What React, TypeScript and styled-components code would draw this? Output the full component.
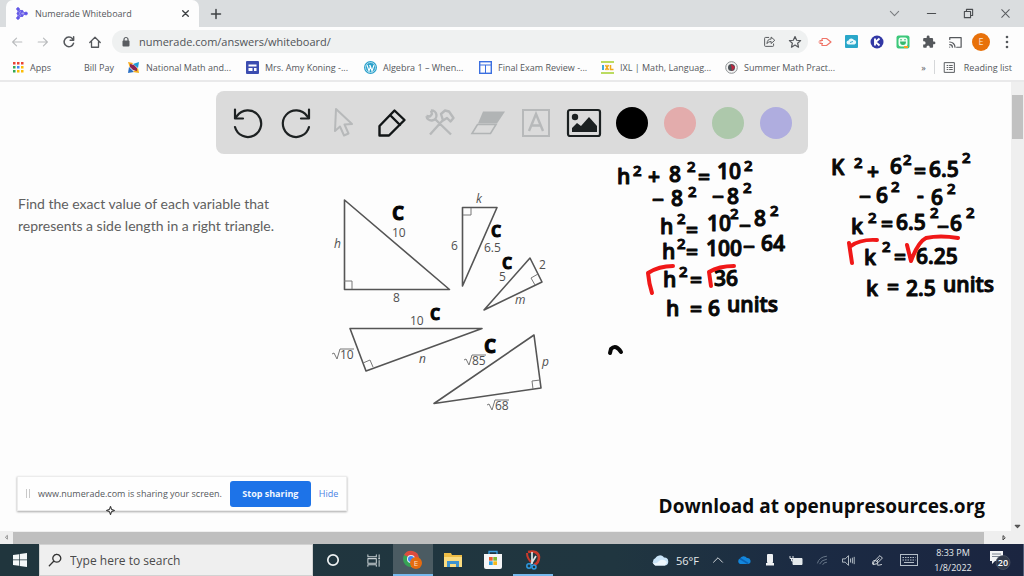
import React from "react";
import styled, { createGlobalStyle } from "styled-components";

const ui = `"Open Sans", "Noto Sans", sans-serif`;

const Global = createGlobalStyle`
  * { box-sizing: border-box; }
  html, body { margin: 0; background: #fdfdfd; }
  body { font-family: ${ui}; color: #55585c; }
  button, input { font: inherit; color: inherit; border: 0; background: none; padding: 0; margin: 0; outline: 0; }
  a { color: inherit; text-decoration: none; }
  svg { display: block; flex: none; }
`;

const Screen = styled.div`
  min-height: 100vh;
  display: flex;
  flex-direction: column;
  overflow: hidden;
`;

const TabStrip = styled.header`
  height: 27px;
  background: #dadddf;
  display: flex;
  align-items: center;
  padding-left: 6px;
`;
const Tab = styled.div`
  align-self: stretch;
  width: 193px;
  padding: 0 9px 0 10px;
  background: #fdfdfd;
  border-radius: 7px 7px 0 0;
  display: flex;
  align-items: center;
  gap: 7px;
`;
const TabTitle = styled.span`
  flex: 1;
  font-size: 9px;
  white-space: nowrap;
`;
const WindowControls = styled.div`
  margin-left: auto;
  display: flex;
`;
const IconButton = styled.button<{ $w?: number; $h?: number }>`
  width: ${(p) => p.$w ?? 26}px;
  height: ${(p) => p.$h ?? 26}px;
  flex: none;
  display: flex;
  align-items: center;
  justify-content: center;
`;

const Toolbar = styled.div`
  height: 29px;
  background: #fdfdfd;
  display: flex;
  align-items: center;
  padding: 0 4px;
`;
const Omnibox = styled.div`
  flex: 1;
  min-width: 0;
  height: 23px;
  margin: 0 4px;
  padding-left: 9px;
  background: #eff1f1;
  border-radius: 12px;
  display: flex;
  align-items: center;
  gap: 8px;
`;
const OmniboxActions = styled.div`
  display: flex;
`;
const Address = styled.input`
  flex: 1;
  min-width: 0;
  font-size: 11px;
  color: #505357;
`;
const Avatar = styled.span`
  width: 18px;
  height: 18px;
  border-radius: 50%;
  background: #e8710a;
  color: #fbe3cf;
  font-size: 9px;
  line-height: 18px;
  text-align: center;
`;

const Bookmarks = styled.nav`
  height: 26px;
  padding: 0 12px 2px;
  background: #fdfdfd;
  border-bottom: 2px solid #e9e9ea;
  display: flex;
  align-items: center;
  font-size: 9px;
  white-space: nowrap;
`;
const Bookmark = styled.a<{ $w: number }>`
  width: ${(p) => p.$w}px;
  display: flex;
  align-items: center;
  gap: 6px;
`;
const ReadingList = styled.div`
  margin-left: auto;
  display: flex;
  align-items: center;
  gap: 8px;
`;
const Divider = styled.span`
  width: 1px;
  height: 14px;
  background: #d5d7d9;
`;

const Viewport = styled.div`
  flex: 1;
  display: flex;
`;
const Page = styled.main`
  flex: 1;
  min-width: 0;
  display: flex;
  flex-direction: column;
  background: #fdfdfd;
`;
const Palette = styled.div`
  align-self: center;
  width: 592px;
  height: 63px;
  margin: 9px 0 0 12px;
  padding: 0 8px;
  background: #dbdbdb;
  border-radius: 8px;
  display: flex;
  align-items: center;
`;
const Swatch = styled.span<{ $c: string }>`
  width: 32px;
  height: 32px;
  border-radius: 50%;
  background: ${(p) => p.$c};
`;
const Board = styled.section`
  flex: 1;
  display: flex;
  align-items: flex-start;
`;
const Question = styled.p`
  flex: none;
  width: 320px;
  margin: 0;
  padding: 39px 40px 0 18px;
  font-family: Lato, sans-serif;
  font-size: 14px;
  line-height: 22px;
  color: #606060;
`;
const Figures = styled.svg`
  margin-top: 31px;
  font-family: "Open Sans", sans-serif;
  font-size: 12px;
  fill: #505050;
`;
const Ink = styled.svg`
  margin-left: 40px;
  overflow: visible;
`;
const Footer = styled.footer`
  padding: 0 26px 12px 17px;
  display: flex;
  align-items: flex-end;
  justify-content: space-between;
`;
const ShareBar = styled.div`
  height: 35px;
  margin-bottom: 8px;
  padding: 0 8px;
  background: #fefefe;
  border: 1px solid #ececec;
  box-shadow: 0 1px 2px #a9a9a9;
  display: flex;
  align-items: center;
  font-size: 9px;
  white-space: nowrap;
`;
const Grip = styled.span`
  width: 4px;
  height: 9px;
  margin-right: 8px;
  border: solid #c9c9c9;
  border-width: 0 1px;
`;
const StopButton = styled.button`
  width: 81px;
  height: 26px;
  margin: 0 8px;
  border-radius: 3px;
  background: #1d73e8;
  color: #f2f7ff;
  font-weight: 700;
`;
const HideButton = styled.button`
  color: #4a82e4;
`;
const Credit = styled.p`
  margin: 0;
  line-height: 26px;
  font-weight: 700;
  font-size: 19px;
  color: #0c0c0c;
`;
const Cursor = styled.span`
  position: absolute;
  left: 106px;
  top: 506px;
`;

const VScroll = styled.div`
  width: 13px;
  background: #efefef;
  display: flex;
  flex-direction: column;
  align-items: center;
  justify-content: space-between;
`;
const VThumb = styled.div`
  width: 11px;
  height: 44px;
  margin: 13px 0 auto;
  background: #c1c1c1;
`;
const HScroll = styled.div`
  height: 13px;
  background: #efefef;
  display: flex;
  align-items: center;
`;
const HThumb = styled.div`
  flex: 1;
  height: 12px;
  background: #bfbfbf;
`;

const Taskbar = styled.footer`
  height: 32px;
  background: linear-gradient(90deg, #20353d, #203640 60%, #1b2a43 80%, #1b2540);
  color: #e6eaec;
  display: flex;
  align-items: center;
`;
const Search = styled.label`
  width: 274px;
  height: 32px;
  padding-left: 8px;
  background: #efefef;
  border: 1px solid #d2d2d2;
  display: flex;
  align-items: center;
  gap: 8px;
  color: #3e3e3e;
`;
const SearchInput = styled.input`
  flex: 1;
  min-width: 0;
  font-size: 12px;
  &::placeholder { color: #4a4a4a; opacity: 1; }
`;
const TaskButton = styled(IconButton)<{ $active?: boolean; $open?: boolean }>`
  width: 40px;
  height: 32px;
  background: ${(p) => (p.$active ? "#4b5b62" : "transparent")};
  box-shadow: ${(p) => (p.$open ? "inset 0 -2px #76b9ed" : "none")};
`;
const Weather = styled.button`
  margin-left: auto;
  margin-right: 6px;
  display: flex;
  align-items: center;
  gap: 7px;
  font-size: 11px;
`;
const Clock = styled.time`
  width: 56px;
  font-size: 9px;
  line-height: 15px;
  text-align: center;
`;
const Notifications = styled.button`
  width: 38px;
  margin-right: 4px;
  height: 32px;
  display: flex;
  align-items: center;
  justify-content: center;
`;
const DesktopEdge = styled.span`
  width: 1px;
  height: 32px;
  background: #53607a;
`;

type Mark = [number, number, string];

/* One array per written line; "²" marks are drawn as a small raised 2. */
const work: Mark[][] = [
  [[617, 184, "h"], [633, 176, "²"], [648, 184, "+"], [669, 182, "8"], [687, 172, "²"], [698, 185, "="], [717, 179, "10"], [744, 171, "²"]],
  [[652, 207, "−"], [671, 206, "8"], [688, 197, "²"], [712, 204, "−"], [727, 204, "8"], [743, 193, "²"]],
  [[660, 234, "h"], [677, 224, "²"], [686, 238, "="], [707, 231, "10"], [730, 219, "²"], [739, 233, "−"], [754, 226, "8"], [770, 216, "²"]],
  [[662, 259, "h"], [677, 249, "²"], [686, 260, "="], [706, 256, "100"], [743, 254, "−"], [761, 251, "64"]],
  [[663, 287, "h"], [679, 277, "²"], [690, 288, "="], [714, 286, "36"]],
  [[666, 316, "h"], [690, 317, "="], [708, 316, "6"], [727, 312, "units"]],
  [[831, 175, "K"], [854, 168, "²"], [867, 179, "+"], [890, 174, "6"], [903, 165, "²"], [914, 179, "="], [929, 177, "6.5"], [962, 163, "²"]],
  [[859, 204, "−"], [876, 203, "6"], [891, 192, "²"], [917, 203, "-"], [931, 205, "6"], [947, 194, "²"]],
  [[851, 234, "k"], [868, 223, "²"], [881, 232, "="], [896, 230, "6.5"], [930, 218, "²"], [937, 234, "−"], [950, 231, "6"], [966, 218, "²"]],
  [[864, 265, "k"], [882, 252, "²"], [894, 265, "="], [916, 264, "6.25"]],
  [[866, 296, "k"], [887, 295, "="], [906, 296, "2.5"], [943, 292, "units"]],
];

const Handwriting = () => (
  <Ink width="404" height="210" viewBox="600 154 404 210" fontFamily="'Open Sans', sans-serif" fill="#080808">
    <g fontSize="21" fontWeight="600" stroke="#080808" strokeWidth="1" strokeLinejoin="round">
      {work.map((line, i) => (
        <text key={i}>
          {line.map(([x, y, t], j) =>
            t === "²" ? <tspan key={j} x={x} y={y} fontSize="15">2</tspan> : <tspan key={j} x={x} y={y}>{t}</tspan>
          )}
        </text>
      ))}
    </g>
    <g fill="none" strokeLinecap="round" strokeLinejoin="round" strokeWidth="4">
      <path stroke="#f01818" d="M652 293Q649 284 648 273Q659 266 673 266M711 286L709 272Q719 266 734 266" />
      <path stroke="#f01818" d="M852 263L849 243M851 246Q860 239 877 240M907 245L911 261Q918 242 926 238Q940 235 958 238" />
      <path stroke="#080808" d="M610 353L611 349Q616 344 621 352" />
    </g>
  </Ink>
);

const Root = ({ x, y, n }: { x: number; y: number; n: string }) => (
  <g>
    <path d={`M${x} ${y - 5}l2 -1l3 6l3 -10h14`} fill="none" stroke="#777" />
    <text x={x + 8} y={y}>{n}</text>
  </g>
);

const Triangles = () => (
  <Figures width="240" height="235" viewBox="320 185 240 235">
    <g fill="none" stroke="#555" strokeWidth="1.6" strokeLinejoin="round">
      <path d="M344.500 200V289.500H449.500Z" />
      <path d="M462.500 207.500H497L462.500 286Z" />
      <path d="M530 258L542 282L484 310Z" />
      <path d="M350 328.500H482L366 371Z" />
      <path d="M534 335L541 388L434 403.500Z" />
      <path strokeWidth="1" stroke="#777" d="M344 281h8v8M463 215h8v-7M538 274l-7 4l4 7M363 363l7-3l3 7M540 380l-8 1l1 8" />
    </g>
    <text x="392" y="237">10</text>
    <text x="393" y="302">8</text>
    <text x="451" y="250">6</text>
    <text x="484" y="252">6.5</text>
    <text x="499" y="281">5</text>
    <text x="539" y="269">2</text>
    <text x="410" y="325">10</text>
    <g fontStyle="italic">
      <text x="334" y="248">h</text>
      <text x="476" y="203">k</text>
      <text x="515" y="304">m</text>
      <text x="419" y="363">n</text>
      <text x="542" y="366">p</text>
    </g>
    <Root x={332} y={359} n="10" />
    <Root x={464} y={365} n="85" />
    <Root x={487} y={410} n="68" />
    <g fontSize="19" fontWeight="700" fill="#050505" stroke="#050505" strokeWidth="1" strokeLinejoin="round">
      <text x="392" y="220">C</text>
      <text x="484" y="353">C</text>
      <text x="491" y="237" fontSize="16">C</text>
      <text x="502" y="269" fontSize="16">C</text>
      <text x="430" y="320" fontSize="16">C</text>
    </g>
  </Figures>
);

const Line = ({ d, s = 14, c = "#55585c", w = 1.3, box = 16, fill = "none" }: { d: string; s?: number; c?: string; w?: number; box?: number; fill?: string }) => (
  <svg width={s} height={s} viewBox={`0 0 ${box} ${box}`} fill={fill} stroke={c} strokeWidth={w} strokeLinecap="round" strokeLinejoin="round">
    <path d={d} />
  </svg>
);

const NumeradeLogo = () => (
  <svg width="12" height="13" viewBox="0 0 12 13" stroke="#6a5fe8" fill="#5b50e6">
    <path d="M2 2L10 6.500L2 11ZM2 2L6 8.700M2 11L6 4.300" fill="#a9a4f2" strokeWidth="1" />
    <circle cx="2" cy="2" r="1.300" /><circle cx="2" cy="6.500" r="1" /><circle cx="2" cy="11" r="1.300" />
    <circle cx="6" cy="4.300" r="1" /><circle cx="6" cy="8.700" r="1" /><circle cx="10" cy="6.500" r="1.400" />
  </svg>
);
const AppsIcon = () => (
  <svg width="12" height="12" viewBox="0 0 12 12">
    {["#ea4335", "#ea4335", "#ea4335", "#34a853", "#4285f4", "#fbbc05", "#34a853", "#fbbc05", "#fbbc05"].map((c, i) => (
      <rect key={i} x={(i % 3) * 4 + 1} y={Math.floor(i / 3) * 4 + 1} width="2.500" height="2.500" fill={c} />
    ))}
  </svg>
);
const MathIcon = () => (
  <svg width="13" height="13" viewBox="0 0 13 13">
    <path d="M1 1l5 1l-3 5z" fill="#f7a81b" /><path d="M12 1l-1 6l-5-4z" fill="#1f9ad6" />
    <path d="M1 12l1-6l5 5z" fill="#2a6fc4" /><path d="M12 12l-6-1l5-4z" fill="#f2b01e" />
    <path d="M3 3l4 1l3 3v3l-4-1l-3-3z" fill="#8c2450" />
  </svg>
);
const SiteIcon = () => (
  <svg width="13" height="13" viewBox="0 0 13 13"><rect width="13" height="13" rx="1" fill="#3c4db0" /><path d="M2.500 3.500h8v2h-8zM2.500 7h4v3h-4zM8 7h2.500v3H8z" fill="#fff" /></svg>
);
const WordpressIcon = () => (
  <svg width="13" height="13" viewBox="0 0 13 13"><circle cx="6.500" cy="6.500" r="6.500" fill="#2aa0cb" /><circle cx="6.500" cy="6.500" r="5" fill="none" stroke="#d8f0f8" strokeWidth=".7" /><path d="M3 4l2 6l1.500-4.500L8 10l2-6M5.500 4l1 2" fill="none" stroke="#fff" strokeWidth="1.100" /></svg>
);
const TableIcon = () => (
  <svg width="13" height="13" viewBox="0 0 13 13" fill="none" stroke="#3b6fe0"><rect x=".7" y=".7" width="11.600" height="11.600" strokeWidth="1.400" /><path d="M1 4h11M6.500 4v8" /></svg>
);
const IxlIcon = () => (
  <svg width="13" height="13" viewBox="0 0 13 13"><path d="M0 1h13M0 12h13" stroke="#a5cf2c" strokeWidth="1.600" /><path d="M2 4v5" stroke="#2b9fd8" strokeWidth="1.800" /><path d="M4.500 4l3 5M7.500 4l-3 5M9.500 4v4.500h3" stroke="#f0a91c" strokeWidth="1.500" fill="none" /></svg>
);
const TargetIcon = () => (
  <svg width="13" height="13" viewBox="0 0 13 13"><circle cx="6.500" cy="6.500" r="5.800" fill="#f4f4f4" stroke="#8e9294" /><circle cx="6.500" cy="6.500" r="3.500" fill="#4b5156" /><path d="M6 3l4 3l-3 4z" fill="#c1243f" /></svg>
);

const bookmarks: { label: string; w: number; icon?: React.ReactNode }[] = [
  { label: "Apps", w: 72, icon: <AppsIcon /> },
  { label: "Bill Pay", w: 43 },
  { label: "National Math and...", w: 119, icon: <MathIcon /> },
  { label: "Mrs. Amy Koning -...", w: 118, icon: <SiteIcon /> },
  { label: "Algebra 1 – When...", w: 115, icon: <WordpressIcon /> },
  { label: "Final Exam Review -...", w: 122, icon: <TableIcon /> },
  { label: "IXL | Math, Languag...", w: 124, icon: <IxlIcon /> },
  { label: "Summer Math Pract...", w: 124, icon: <TargetIcon /> },
];

const BrowserTools = () => (
  <Toolbar>
    <IconButton aria-label="Back"><Line c="#b9bbbd" d="M13.500 8H3M7.500 3.500L3 8l4.500 4.500" /></IconButton>
    <IconButton aria-label="Forward"><Line c="#b9bbbd" d="M2.500 8H13M8.500 3.500L13 8l-4.500 4.500" /></IconButton>
    <IconButton aria-label="Reload"><Line w={1.7} d="M13.200 9.500A5.500 5.500 0 1 1 12 4.200M13.300 2v4h-4" /></IconButton>
    <IconButton aria-label="Home"><Line w={1.5} d="M2 8.500L8 2.500l6 6M4 7.500V14h8V7.500" /></IconButton>
    <Omnibox>
      <svg width="10" height="12" viewBox="0 0 10 12" fill="#5a5d61"><rect x="1.500" y="4.500" width="7" height="6" rx="1" /><path d="M3 5V3.500a2 2 0 0 1 4 0V5" fill="none" stroke="#5a5d61" strokeWidth="1.200" /></svg>
      <Address aria-label="Address" defaultValue="numerade.com/answers/whiteboard/" />
      <OmniboxActions>
        <IconButton aria-label="Share"><Line s={13} w={1.2} d="M7 3H3Q2 3 2 4v9q0 1 1 1h9q1 0 1-1v-2M5 10q0-5 5-5V2.500l4.500 4L10 10.500V8q-3 0-5 2z" /></IconButton>
        <IconButton aria-label="Bookmark"><Line s={14} w={1.4} d="M8 1.800l1.900 4.200l4.500.4l-3.400 3l1 4.500L8 11.500l-4 2.400l1-4.500l-3.400-3l4.500-.4z" /></IconButton>
      </OmniboxActions>
    </Omnibox>
    <IconButton aria-label="Screen recorder">
      <svg width="14" height="12" viewBox="0 0 14 12" fill="none" stroke="#f07468" strokeWidth="1.200" strokeLinejoin="round"><path d="M4 2.500h4.500L13 6L8.500 9.500H4V7.500M4 2.500v2" /><path d="M1.500 4.500H5M.5 6h3M1.500 7.500H5" /></svg>
    </IconButton>
    <IconButton aria-label="Cloud notes">
      <svg width="13" height="13" viewBox="0 0 13 13"><rect width="13" height="13" rx="1" fill="#2aa7c9" /><path d="M3.500 9.500a2 2 0 0 1 0-4a3 3 0 0 1 5.500-.5a2.300 2.300 0 0 1 .5 4.500z" fill="#e8f8fc" /><path d="M5 7.500l3-1" stroke="#2aa7c9" /></svg>
    </IconButton>
    <IconButton aria-label="Kami">
      <svg width="14" height="14" viewBox="0 0 14 14"><circle cx="7" cy="7" r="6.500" fill="#3238a5" /><path d="M5 3.500v7M9.500 3.500L5.500 7l4 3.500" stroke="#fff" strokeWidth="1.900" fill="none" /></svg>
    </IconButton>
    <IconButton aria-label="Bitmoji">
      <svg width="14" height="14" viewBox="0 0 14 14"><rect x=".5" y=".5" width="13" height="13" rx="2" fill="#3cc87a" /><rect x="2.500" y="2.500" width="9" height="9" rx="2.500" fill="#f0fff5" /><path d="M4 6.500h6q0 3.500-3 3.500t-3-3.500z" fill="#34b86e" /><circle cx="5" cy="4.800" r=".8" fill="#34b86e" /><circle cx="9" cy="4.800" r=".8" fill="#34b86e" /><path d="M8 12h4" stroke="#ff9b20" strokeWidth="2" /></svg>
    </IconButton>
    <IconButton aria-label="Extensions">
      <svg width="14" height="14" viewBox="0 0 24 24" fill="#55585c"><path d="M20.500 11H19V7c0-1.100-.9-2-2-2h-4V3.500a2.500 2.500 0 0 0-5 0V5H4c-1.100 0-2 .9-2 2v3.800h1.500a2.700 2.700 0 0 1 0 5.400H2V20c0 1.100.9 2 2 2h3.800v-1.500a2.700 2.700 0 0 1 5.400 0V22H17c1.100 0 2-.9 2-2v-4h1.500a2.500 2.500 0 0 0 0-5z" /></svg>
    </IconButton>
    <IconButton aria-label="Cast"><Line w={1.4} d="M2 5V3h13v11h-5M2 8a6 6 0 0 1 6 6M2 11a3 3 0 0 1 3 3M2 13.700v.1" /></IconButton>
    <IconButton aria-label="Profile"><Avatar>E</Avatar></IconButton>
    <IconButton aria-label="Menu">
      <svg width="4" height="14" viewBox="0 0 4 14" fill="#55585c"><circle cx="2" cy="2" r="1.300" /><circle cx="2" cy="7" r="1.300" /><circle cx="2" cy="12" r="1.300" /></svg>
    </IconButton>
  </Toolbar>
);

const BoardTools = () => (
  <Palette>
    <IconButton $w={48} $h={48} aria-label="Undo"><Line s={34} box={34} w={2.2} c="#1d2122" d="M4 21A13.300 13.300 0 1 0 6 10L4 12M4 3.500v9h8" /></IconButton>
    <IconButton $w={48} $h={48} aria-label="Redo"><Line s={34} box={34} w={2.2} c="#1d2122" d="M30 21A13.300 13.300 0 1 1 28 10L30 12M30 3.500v9h-8" /></IconButton>
    <IconButton $w={48} $h={48} aria-label="Select"><Line s={34} box={34} w={2} c="#b7b9ba" d="M9 3l16 15l-7.500.5l4 9l-4.500 2l-4-9L8 25z" /></IconButton>
    <IconButton $w={48} $h={48} aria-label="Pen"><Line s={34} box={34} w={2.4} c="#111516" d="M4.500 29.500V20L19.500 4.500L29.500 14L14 29.500zM15 9L25 19" /></IconButton>
    <IconButton $w={48} $h={48} aria-label="Tools">
      <svg width="34" height="34" viewBox="0 0 34 34" fill="none" stroke="#b7b9ba" strokeWidth="2.400" strokeLinejoin="round">
        <path d="M11.500 12.500L28 28.500M20 14L7 28.500M8 4.500a5 5 0 1 1-4.500 5.500M8 4.500L9 8L7 10.500L3.500 10M18 8l4-3.500l4 1l4.500 6.500l-3 3.500L24 12l-4 2.500z" />
      </svg>
    </IconButton>
    <IconButton $w={48} $h={48} aria-label="Eraser">
      <svg width="36" height="34" viewBox="0 0 36 34"><path d="M13 5.500H35L27 17.500H8z" fill="#b1b4b5" /><path d="M7.500 18.500H26L20.500 27.500H2z" fill="none" stroke="#b1b4b5" strokeWidth="1.600" /></svg>
    </IconButton>
    <IconButton $w={48} $h={48} aria-label="Text">
      <svg width="30" height="30" viewBox="0 0 30 30" fill="none" stroke="#b7b9ba" strokeWidth="2"><rect x="2" y="2" width="26" height="26" /><path d="M8 23l7-17l7 17M10.500 17.500h9" strokeWidth="2.400" /></svg>
    </IconButton>
    <IconButton $w={48} $h={48} aria-label="Image">
      <svg width="36" height="30" viewBox="0 0 36 30"><rect x="2" y="2" width="32" height="26" rx="2" fill="none" stroke="#1b2021" strokeWidth="2.200" /><circle cx="9" cy="9" r="3.200" fill="#1b2021" /><path d="M6 24v-4l5-5l4 3l8-9l8 9v6z" fill="#1b2021" /></svg>
    </IconButton>
    {[["Black", "#000"], ["Red", "#e3acac"], ["Green", "#adc8ab"], ["Blue", "#afaddf"]].map(([n, c]) => (
      <IconButton key={n} $w={48} $h={48} aria-label={n}><Swatch $c={c} /></IconButton>
    ))}
  </Palette>
);

const Tray = () => (
  <>
    <Weather>
      <svg width="18" height="14" viewBox="0 0 18 14"><path d="M4.500 12.500a4 4 0 0 1 0-7.500a5 5 0 0 1 8.500-.5a4 4 0 0 1 .5 8z" fill="#c9e4f8" /><path d="M1 9q4 3 7-1q4-3 8 1l-2 3.500H4z" fill="#eef7fd" /></svg>
      56°F
    </Weather>
    <IconButton aria-label="Hidden icons"><Line s={12} c="#d5dade" d="M2 11l6-6l6 6" /></IconButton>
    <IconButton aria-label="OneDrive"><svg width="14" height="10" viewBox="0 0 14 10"><path d="M3 9a3 3 0 0 1 0-5.500a4 4 0 0 1 7-.5a3 3 0 0 1 1 6z" fill="#1387dd" /><path d="M3 3.500l8 5" stroke="#0a62b5" strokeWidth="1.500" /></svg></IconButton>
    <IconButton aria-label="Microphone"><svg width="8" height="14" viewBox="0 0 8 14" fill="#eef1f3"><rect x="1" y="1" width="6" height="9" rx="1" /><path d="M0 10h8v2.500H0z" /></svg></IconButton>
    <IconButton aria-label="Battery"><svg width="14" height="11" viewBox="0 0 14 11"><path d="M4 3.500h9v6H4z" fill="#e4e9ec" stroke="#e4e9ec" /><path d="M1 1v2.500h3V1M2.500 3.500V6h2" stroke="#e4e9ec" fill="none" /></svg></IconButton>
    <IconButton aria-label="Network"><Line s={12} c="#69788a" d="M2 12Q4 4 14 3M5 13Q7 8 14 7M9 14q1-3 5-3" /></IconButton>
    <IconButton aria-label="Volume"><Line s={13} c="#c2cbd2" w={1.1} d="M1 6h3l4-4v12l-4-4H1zM10.500 6v4M12.800 5v6M15 4v8" /></IconButton>
    <IconButton $w={32} aria-label="Pen"><Line s={13} c="#d5dade" w={1.2} d="M4 9L11 2l3 3l-7 7l-4 1zM7 9l3-3M2 12q-1-4 3-4q5 1 3 4t5 1" /></IconButton>
    <IconButton $w={32} aria-label="Touch keyboard">
      <svg width="18" height="12" viewBox="0 0 18 12" fill="none" stroke="#b4bec8"><rect x=".5" y=".5" width="17" height="11" /><path d="M2.500 3.500h13M2.500 6h13" strokeDasharray="1.500 1" /><path d="M4 8.500h10" /></svg>
    </IconButton>
    <Clock>8:33 PM<br />1/8/2022</Clock>
    <Notifications aria-label="20 notifications">
      <svg width="22" height="22" viewBox="0 0 22 22"><path d="M1 2h13v10H6l-3 3v-3H1z" fill="#f2f4f6" /><path d="M3 5h9M3 7.500h9" stroke="#5d6a7a" strokeWidth=".8" /><circle cx="14" cy="13.500" r="7" fill="#30394a" stroke="#56606f" strokeWidth=".6" /><text x="14" y="17" fontSize="9" fontWeight="600" textAnchor="middle" fill="#fff">20</text></svg>
    </Notifications>
    <DesktopEdge />
  </>
);

export default function App() {
  return (
    <Screen>
      <Global />
      <TabStrip>
        <Tab>
          <NumeradeLogo />
          <TabTitle>Numerade Whiteboard</TabTitle>
          <IconButton $w={10} $h={14} aria-label="Close tab"><Line s={9} w={2.3} c="#3c3f42" d="M3 3l10 10M13 3L3 13" /></IconButton>
        </Tab>
        <IconButton $w={34} aria-label="New tab"><Line s={12} w={2} c="#3f4245" d="M8 2v12M2 8h12" /></IconButton>
        <WindowControls>
          <IconButton $w={37} aria-label="Search tabs"><Line s={11} w={1.6} c="#7a7d80" d="M2 5l6 6l6-6" /></IconButton>
          <IconButton $w={37} aria-label="Minimize"><Line s={11} w={1.6} c="#4a4d50" d="M2 8h12" /></IconButton>
          <IconButton $w={37} aria-label="Restore"><Line s={11} w={1.6} c="#4a4d50" d="M2 5h9v9H2zM5 5V2h9v9h-3" /></IconButton>
          <IconButton $w={37} aria-label="Close"><Line s={11} w={1.5} c="#5a5d60" d="M2.500 2.500l11 11M13.500 2.500l-11 11" /></IconButton>
        </WindowControls>
      </TabStrip>
      <BrowserTools />
      <Bookmarks>
        {bookmarks.map((b) => (
          <Bookmark key={b.label} href="#" $w={b.w}>{b.icon}{b.label}</Bookmark>
        ))}
        <ReadingList>
          <span>»</span>
          <Divider />
          <Line s={13} w={1.2} d="M2 2h12v12H2zM5 5.500h1M5 8h1M5 10.500h1M8 5.500h3.500M8 8h3.500M8 10.500h3.500" />
          <span>Reading list</span>
        </ReadingList>
      </Bookmarks>
      <Viewport>
        <Page>
          <BoardTools />
          <Board>
            <Question>Find the exact value of each variable that represents a side length in a right triangle.</Question>
            <Triangles />
            <Handwriting />
          </Board>
          <Footer>
            <ShareBar>
              <Grip />
              www.numerade.com is sharing your screen.
              <StopButton>Stop sharing</StopButton>
              <HideButton>Hide</HideButton>
            </ShareBar>
            <Credit>Download at openupresources.org</Credit>
          </Footer>
        </Page>
        <VScroll>
          <VThumb />
          <Line s={9} c="#555" d="M4 6h8l-4 4zM6 7h4" w={2} />
        </VScroll>
      </Viewport>
      <HScroll>
        <IconButton $w={13} $h={13} aria-label="Scroll left"><Line s={7} c="#888" w={2} d="M10 4v8l-4-4z" /></IconButton>
        <HThumb />
        <IconButton $w={40} $h={13} aria-label="Scroll right"><Line s={8} c="#444" w={2} d="M6 4v8l4-4z" /></IconButton>
      </HScroll>
      <Taskbar>
        <IconButton $w={39} $h={32} aria-label="Start">
          <svg width="14" height="14" viewBox="0 0 14 14" fill="#f4f7f8"><path d="M0 2l6-.8v5.400H0zM6.700 1.100L14 0v6.600H6.700zM0 7.300h6v5.500L0 12zM6.700 7.300H14V14l-7.300-1z" /></svg>
        </IconButton>
        <Search>
          <Line s={14} w={1.5} c="#333" d="M10 1.500a4.500 4.500 0 1 0 .1 0M6.500 9.500L1.500 14.500" />
          <SearchInput aria-label="Search" placeholder="Type here to search" />
        </Search>
        <TaskButton aria-label="Cortana"><svg width="14" height="14" viewBox="0 0 14 14"><circle cx="7" cy="7" r="5.200" fill="none" stroke="#eef2f3" strokeWidth="1.700" /></svg></TaskButton>
        <TaskButton aria-label="Task view"><Line s={15} w={1.1} c="#c8d0d3" d="M2 2v2h9V2M2 6h9v5H2zM2 14v-1.500h9V14M14 2v3M14 8v6M13.500 6h1" /></TaskButton>
        <TaskButton $active $open aria-label="Chrome">
          <svg width="22" height="20" viewBox="0 0 22 20">
            <circle cx="9" cy="9" r="8" fill="#36a355" /><path d="M2 5a8 8 0 0 1 15 3H9z" fill="#dd4b3e" /><path d="M9 17a8 8 0 0 0 8-9H9z" fill="#f2b92c" />
            <circle cx="9" cy="9" r="4" fill="#e9f0f5" /><circle cx="9" cy="9" r="3" fill="#4285f4" />
            <circle cx="14" cy="13" r="6" fill="#e56b10" /><text x="14" y="16" fontSize="8" textAnchor="middle" fill="#fce0c8">E</text>
          </svg>
        </TaskButton>
        <TaskButton aria-label="File Explorer"><svg width="18" height="16" viewBox="0 0 18 16"><path d="M0 1h7l1 2h10v12H0z" fill="#eebd46" /><path d="M0 5h18v10H0z" fill="#fbdc80" /><path d="M3 15V9h12v6h-3v-3H6v3z" fill="#3f93cf" /></svg></TaskButton>
        <TaskButton aria-label="Microsoft Store"><svg width="20" height="20" viewBox="0 0 20 20"><path d="M6 4V1.500h8V4" fill="none" stroke="#3aa0e0" strokeWidth="1.300" /><path d="M1 4h18v13q0 2-2 2H3q-2 0-2-2z" fill="#f5f6f7" /><path d="M6 7h3.700v3.700H6z" fill="#ea5b30" /><path d="M10.300 7H14v3.700h-3.700z" fill="#7db933" /><path d="M6 11.300h3.700V15H6z" fill="#2fa3e6" /><path d="M10.300 11.300H14V15h-3.700z" fill="#f6b91a" /></svg></TaskButton>
        <TaskButton $open aria-label="Snipping tool"><svg width="18" height="20" viewBox="0 0 18 20" fill="none"><path d="M4 2q10-2 11 5q0 6-5 8" stroke="#c93a2c" strokeWidth="2.600" /><path d="M3 3q0 5 4 9" stroke="#c93a2c" strokeWidth="2" /><path d="M8 2v12M12 6l-5 8" stroke="#e0e5e8" strokeWidth="1.700" /><circle cx="5" cy="16" r="2.200" stroke="#2f9ae0" strokeWidth="1.500" /><circle cx="10" cy="17" r="2" stroke="#2f9ae0" strokeWidth="1.500" /></svg></TaskButton>
        <Tray />
      </Taskbar>
      <Cursor><Line s={9} w={2} c="#444" fill="#fff" d="M8 1l2 5l5 2l-5 2l-2 5l-2-5l-5-2l5-2z" /></Cursor>
    </Screen>
  );
}
